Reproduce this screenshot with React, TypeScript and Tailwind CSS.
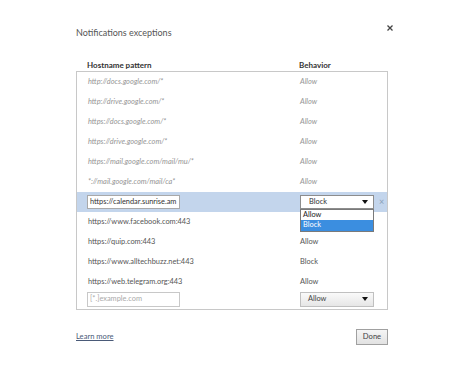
import React from "react";

const font = { fontFamily: 'Lato, "Noto Sans", Arial, sans-serif' };

type Row = { host: string; behavior: string; italic?: boolean; hideBehavior?: boolean };

const topRows: Row[] = [
  { host: "http://docs.google.com/*", behavior: "Allow", italic: true },
  { host: "http://drive.google.com/*", behavior: "Allow", italic: true },
  { host: "https://docs.google.com/*", behavior: "Allow", italic: true },
  { host: "https://drive.google.com/*", behavior: "Allow", italic: true },
  { host: "https://mail.google.com/mail/mu/*", behavior: "Allow", italic: true },
  { host: "*://mail.google.com/mail/ca*", behavior: "Allow", italic: true },
];

const bottomRows: Row[] = [
  { host: "https://www.facebook.com:443", behavior: "Allow", hideBehavior: true },
  { host: "https://quip.com:443", behavior: "Allow" },
  { host: "https://www.alltechbuzz.net:443", behavior: "Block" },
  { host: "https://web.telegram.org:443", behavior: "Allow" },
];

function Arrow() {
  return (
    <svg width="6" height="4" viewBox="0 0 6 4" className="shrink-0">
      <path d="M0 0 H6 L3 4 Z" fill="#111" />
    </svg>
  );
}

function DataRow({ r }: { r: Row }) {
  const cls = r.italic ? "italic text-[#959595]" : "text-[#555]";
  return (
    <div className="flex h-[20px] items-center">
      <div className={`w-[223px] pl-[11px] ${cls}`}>{r.host}</div>
      <div className={`${cls} ${r.hideBehavior ? "invisible" : ""}`}>{r.behavior}</div>
    </div>
  );
}

export default function App() {
  return (
    <div className="w-[474px] h-[379px] bg-white relative" style={font}>
      <div className="pl-[76px] pr-[86px] pt-[26px]">
        <div className="flex items-start justify-between">
          <div className="text-[9px] text-[#555]">Notifications exceptions</div>
          <svg width="6" height="6" viewBox="0 0 6 6" className="-mr-[5px] -mt-[1px]">
            <path d="M0.5 0.5 L5.5 5.5 M5.5 0.5 L0.5 5.5" stroke="#444" strokeWidth="1.3" />
          </svg>
        </div>
        <div className="flex mt-[19px] h-[12px] items-center text-[8px] font-bold text-[#333]">
          <div className="w-[223px] pl-[11px]">Hostname pattern</div>
          <div>Behavior</div>
        </div>
        <div className="border border-[#c8c8c8] text-[7.4px] w-[312px]">
          {topRows.map((r) => (
            <DataRow key={r.host} r={r} />
          ))}
          <div className="relative flex h-[20px] items-center bg-[#c3d5ec]">
            <div className="w-[223px] pl-[10px]">
              <div className="w-[93px] h-[14px] bg-white border border-[#a9a9a9] flex items-center pl-[2px] text-[#333] overflow-hidden whitespace-nowrap">
                https://calendar.sunrise.am
              </div>
            </div>
            <div className="w-[74px] h-[14px] bg-white border border-[#8d8d8d] flex items-center justify-between pl-[8px] pr-[5px] text-[#333]">
              <span>Block</span>
              <Arrow />
            </div>
            <div className="ml-[5px] text-[#8aa0b8] text-[9px] leading-none">×</div>
            <div className="absolute left-[223px] top-[17px] w-[74px] bg-white border border-[#7a7a7a] z-10 text-[#222]">
              <div className="h-[10px] flex items-center pl-[2px]">Allow</div>
              <div className="h-[11px] flex items-center pl-[2px] bg-[#3b8ee0] text-white">Block</div>
            </div>
          </div>
          {bottomRows.map((r) => (
            <DataRow key={r.host} r={r} />
          ))}
          <div className="flex h-[17px] items-start">
            <div className="w-[223px] pl-[10px]">
              <div className="w-[93px] h-[15px] bg-white border border-[#c8c8c8] flex items-center pl-[2px] text-[#aaa]">
                [*.]example.com
              </div>
            </div>
            <div className="w-[74px] h-[15px] border border-[#c0c0c0] bg-gradient-to-b from-[#fafafa] to-[#e6e6e6] flex items-center justify-between pl-[7px] pr-[5px] text-[#444]">
              <span>Allow</span>
              <Arrow />
            </div>
          </div>
        </div>
        <div className="flex items-center justify-between mt-[19px] w-[312px]">
          <span className="text-[7.6px] text-[#4a5a78] underline">Learn more</span>
          <div className="w-[32px] h-[16px] border border-[#a0a0a0] bg-gradient-to-b from-[#f5f5f5] to-[#e2e2e2] flex items-center justify-center text-[7.6px] text-[#444]">
            Done
          </div>
        </div>
      </div>
    </div>
  );
}
